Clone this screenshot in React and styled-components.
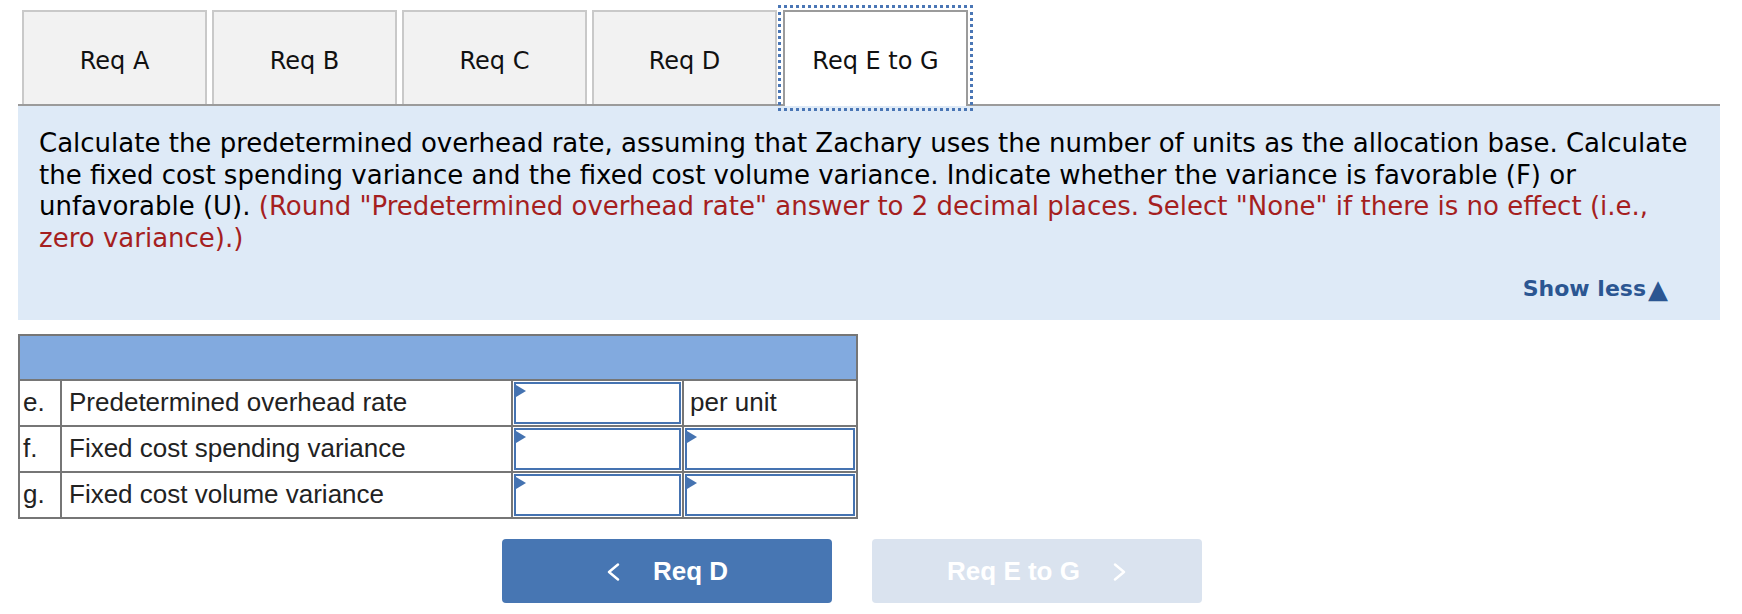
import React from "react";
import styled, { createGlobalStyle, css } from "styled-components";

const Global = createGlobalStyle`
  html, body { margin: 0; padding: 0; background: #fff; }
  body { font-family: "DejaVu Sans", Verdana, sans-serif; }
  * { box-sizing: border-box; }
`;

const Page = styled.div`
  width: 1742px;
  padding: 10px 0 0 18px;
`;

const TabStrip = styled.div`
  display: flex;
  align-items: flex-end;
  gap: 5px;
  margin-left: 4px;
  position: relative;
  z-index: 1;
`;

const Tab = styled.div`
  width: 185px;
  height: 94px;
  display: flex;
  align-items: center;
  justify-content: center;
  padding-top: 5px;
  border: 2px solid #c9c9c9;
  border-bottom: none;
  background: #f2f2f2;
  color: #111;
  font-size: 24px;
  ${(p) =>
    p.$active &&
    css`
      height: 96px;
      margin-bottom: -2px;
      margin-left: 1px;
      padding-top: 3px;
      background: #fff;
      border-color: #9b9b9b;
      outline: 3px dotted #4a76b5;
      outline-offset: 2px;
    `}
`;

const Panel = styled.div`
  width: 1702px;
  background: #deeaf7;
  border-top: 2px solid #9b9b9b;
  padding: 22px 21px 15px 21px;
`;

const Prompt = styled.p`
  margin: 0;
  font-size: 26px;
  line-height: 31.7px;
  color: #000;
`;

const Note = styled.span`
  color: #a51f1f;
`;

const ShowLessRow = styled.div`
  display: flex;
  justify-content: flex-end;
  margin-top: 18px;
  padding-right: 31px;
`;

const ShowLess = styled.span`
  display: flex;
  align-items: center;
  gap: 2px;
  font-weight: bold;
  font-size: 22px;
  line-height: 32px;
  color: #2b5692;
  cursor: pointer;
`;

const Caret = styled.span`
  font-size: 26px;
  line-height: 32px;
`;

const Grid = styled.div`
  margin-top: 14px;
  width: 840px;
  display: grid;
  grid-template-columns: 40px 449px 169px 172px;
  grid-template-rows: 43px 44px 44px 44px;
  gap: 2px;
  padding: 2px;
  background: #767676;
`;

const HeaderCell = styled.div`
  grid-column: 1 / -1;
  background: #82aadf;
`;

const Cell = styled.div`
  background: #fff;
  display: flex;
  align-items: center;
  padding-left: ${(p) => p.$pad ?? 7}px;
  font-family: "Liberation Sans", Arial, sans-serif;
  font-size: 26px;
  color: #222;
  white-space: nowrap;
`;

const InputCell = styled.div`
  background: #fff;
  padding: 1px;
`;

const InputBox = styled.div`
  position: relative;
  height: 100%;
  border: 2px solid #4573b1;
  &::before {
    content: "";
    position: absolute;
    top: 1px;
    left: 0;
    border-top: 6px solid transparent;
    border-bottom: 6px solid transparent;
    border-left: 10px solid #4573b1;
  }
`;

const Field = styled.input`
  width: 100%;
  height: 100%;
  border: none;
  background: transparent;
  outline: none;
  padding: 0 14px;
  font-family: "Liberation Sans", Arial, sans-serif;
  font-size: 22px;
`;

const ButtonRow = styled.div`
  margin-top: 20px;
  display: flex;
  gap: 40px;
  padding-left: 484px;
`;

const NavButton = styled.button`
  width: 330px;
  height: 64px;
  border: none;
  border-radius: 4px;
  background: ${(p) => (p.$disabled ? "#dae3ef" : "#4776b3")};
  color: #fff;
  font-family: "Liberation Sans", Arial, sans-serif;
  font-weight: bold;
  font-size: 26px;
  display: flex;
  align-items: center;
  justify-content: center;
  gap: 33px;
  padding: 2px 0 0 0;
  cursor: ${(p) => (p.$disabled ? "default" : "pointer")};
`;

const Chevron = ({ dir }) => (
  <svg width="14" height="18" viewBox="0 0 14 18" fill="none">
    <polyline
      points={dir === "left" ? "12,1.5 3,9 12,16.5" : "2,1.5 11,9 2,16.5"}
      stroke="#fff"
      strokeWidth="2.4"
      strokeLinecap="round"
      strokeLinejoin="round"
    />
  </svg>
);

const rows = [
  { letter: "e.", label: "Predetermined overhead rate", unit: true },
  { letter: "f.", label: "Fixed cost spending variance", unit: false },
  { letter: "g.", label: "Fixed cost volume variance", unit: false },
];

export default function App() {
  const tabs = ["Req A", "Req B", "Req C", "Req D", "Req E to G"];
  return (
    <Page>
      <Global />
      <TabStrip>
        {tabs.map((t) => (
          <Tab key={t} $active={t === "Req E to G"}>
            {t}
          </Tab>
        ))}
      </TabStrip>
      <Panel>
        <Prompt>
          Calculate the predetermined overhead rate, assuming that Zachary uses the number of units as
          the allocation base. Calculate the fixed cost spending variance and the fixed cost volume
          variance. Indicate whether the variance is favorable (F) or unfavorable (U).{" "}
          <Note>
            (Round "Predetermined overhead rate" answer to 2 decimal places. Select "None" if there is
            no effect (i.e., zero variance).)
          </Note>
        </Prompt>
        <ShowLessRow>
          <ShowLess>
            Show less<Caret>▲</Caret>
          </ShowLess>
        </ShowLessRow>
      </Panel>
      <Grid>
        <HeaderCell />
        {rows.map((r) => (
          <React.Fragment key={r.letter}>
            <Cell $pad={3}>{r.letter}</Cell>
            <Cell>{r.label}</Cell>
            <InputCell>
              <InputBox>
                <Field />
              </InputBox>
            </InputCell>
            {r.unit ? (
              <Cell $pad={6}>per unit</Cell>
            ) : (
              <InputCell>
                <InputBox>
                  <Field />
                </InputBox>
              </InputCell>
            )}
          </React.Fragment>
        ))}
      </Grid>
      <ButtonRow>
        <NavButton>
          <Chevron dir="left" />
          <span>Req D</span>
        </NavButton>
        <NavButton $disabled>
          <span>Req E to G</span>
          <Chevron dir="right" />
        </NavButton>
      </ButtonRow>
    </Page>
  );
}
